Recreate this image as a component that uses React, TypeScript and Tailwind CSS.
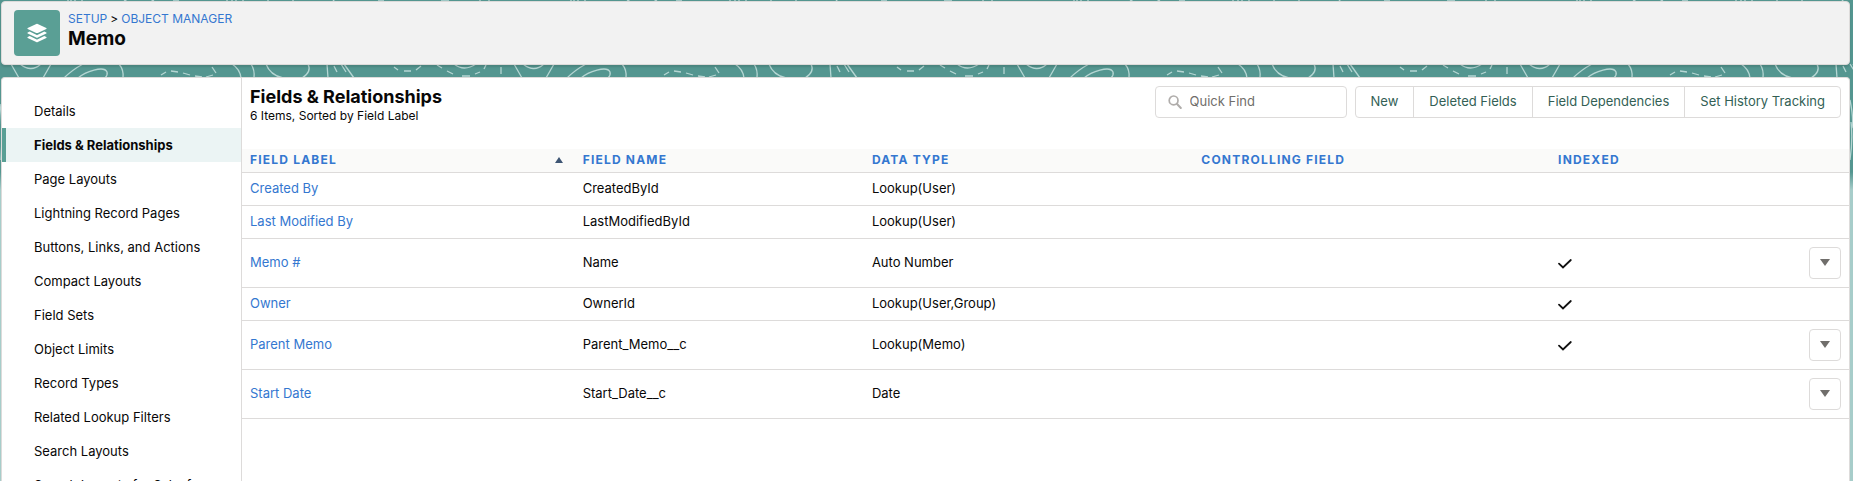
import React from 'react';

type Field = {
  label: string;
  name: string;
  type: string;
  indexed?: boolean;
  menu?: boolean;
};

const navItems = [
  'Details',
  'Fields & Relationships',
  'Page Layouts',
  'Lightning Record Pages',
  'Buttons, Links, and Actions',
  'Compact Layouts',
  'Field Sets',
  'Object Limits',
  'Record Types',
  'Related Lookup Filters',
  'Search Layouts',
  'Search Layouts for Salesforce Classic',
];

const fields: Field[] = [
  { label: 'Created By', name: 'CreatedById', type: 'Lookup(User)' },
  { label: 'Last Modified By', name: 'LastModifiedById', type: 'Lookup(User)' },
  { label: 'Memo #', name: 'Name', type: 'Auto Number', indexed: true, menu: true },
  { label: 'Owner', name: 'OwnerId', type: 'Lookup(User,Group)', indexed: true },
  { label: 'Parent Memo', name: 'Parent_Memo__c', type: 'Lookup(Memo)', indexed: true, menu: true },
  { label: 'Start Date', name: 'Start_Date__c', type: 'Date', menu: true },
];

const actions = ['New', 'Deleted Fields', 'Field Dependencies', 'Set History Tracking'];

// Contour lines behind the page, repeated across the top band
const Backdrop = () => (
  <svg className="absolute inset-x-0 top-0 w-full h-[190px]" aria-hidden="true">
    <defs>
      <pattern id="contours" width="503" height="190" patternUnits="userSpaceOnUse">
        <g fill="none" stroke="#b5d6d3" strokeWidth="1.3">
          <path d="M68 0v2M71 0v2M75 0v2M82 0v2M124 0l4 2M150 2l4-2M173 0h6M227 0v2M232 0v2M236 0v2M243 0v2M268 0v2M293 0v2M333 0l2 2M378 0h6M441 0h8M480 0v2M489 0v2" />
          <path d="M11 64L19 78M20 64Q31 73 41 64M51 64L43 78M64 78Q72 70 83 64" />
          <path d="M78 78C85 72 104 65 107 72Q108 75 105 78" />
          <path d="M119 64Q124 70 123 78M232 64Q240 69 241 78M251 64Q255 70 254 78" />
          <path d="M266 64Q270 75 283 78M308 64Q312 72 302 78M327 64L328 78M344 64L354 78M454 64Q464 72 476 64" />
          <path d="M161 75L166 72M171 71L178 72M183 73L190 75M195 76L202 77M206 77L213 75M212 67L216 73M334 66L337 72" />
          <path d="M394 67L398 70M404 71L411 71M416 70L421 66M437 65L442 68M447 71L453 74M462 76L470 76M475 74L480 72M484 69L486 65M501 67V74" />
          <path d="M341 64L346 72M341 100Q345 120 343 128M342 122Q344 140 341 160M0 104Q3 125 1 160" />
        </g>
      </pattern>
    </defs>
    <rect width="100%" height="100%" fill="url(#contours)" />
  </svg>
);

const LayersIcon = () => (
  <svg viewBox="0 0 20 20" className="w-5 h-5" fill="white" aria-hidden="true">
    <path d="M9.3 1Q10 .7 10.7 1L19.3 5Q20 5.4 19.3 5.9L10.8 9.9Q10 10.3 9.2 9.9L.7 5.9Q0 5.4.7 5Z" />
    <path d="M.7 9.5L2.7 8.6L9.2 11.7Q10 12.1 10.8 11.7L17.3 8.6L19.3 9.5Q20 10 19.3 10.4L10.8 14.5Q10 14.9 9.2 14.5L.7 10.4Q0 10 .7 9.5Z" />
    <path d="M.7 14L2.7 13.1L9.2 16.2Q10 16.6 10.8 16.2L17.3 13.1L19.3 14Q20 14.5 19.3 14.9L10.8 19Q10 19.4 9.2 19L.7 14.9Q0 14.5.7 14Z" />
  </svg>
);

const SearchIcon = () => (
  <svg viewBox="0 0 14 14" className="w-3.5 h-3.5 shrink-0" fill="none" stroke="#b0adab" aria-hidden="true">
    <circle cx="5.6" cy="5.4" r="4.4" strokeWidth="1.7" />
    <path d="M8.8 8.8L12.8 13" strokeWidth="2" strokeLinecap="round" />
  </svg>
);

const CheckIcon = () => (
  <svg viewBox="0 0 14 10" className="w-3.5 h-2.5 mt-0.5" role="img" aria-label="Indexed">
    <path d="M1 4.6L5 8.5L12.8 1" fill="none" stroke="#111" strokeWidth="1.8" strokeLinecap="round" />
  </svg>
);

const PageHeader = () => (
  <header className="relative flex items-start gap-2 mt-px mr-[3px] ml-px h-16 px-3 py-2 bg-[#f2f2f2] border border-[#dddbda] rounded shadow-[0_2px_2px_rgba(0,0,0,0.12)]">
    <div className="flex items-center justify-center w-[46px] h-[46px] rounded bg-[#5a9f95]">
      <LayersIcon />
    </div>
    <div>
      <nav className="text-xs leading-[18px]" aria-label="Breadcrumbs">
        <a href="#setup" className="text-[#3477d0]">SETUP</a>
        <span className="px-[3px]">&gt;</span>
        <a href="#object-manager" className="text-[#3477d0]">OBJECT MANAGER</a>
      </nav>
      <h1 className="text-[19px] leading-[22px] font-bold">Memo</h1>
    </div>
  </header>
);

const Sidebar = () => (
  <nav className="w-60 shrink-0 pt-4 border-r border-[#dddbda]" aria-label="Object settings">
    <ul>
      {navItems.map((item, i) => (
        <li key={item}>
          <a
            href="#"
            className={
              i === 1
                ? 'block pl-7 pr-4 py-2 leading-[18px] font-bold bg-[#ebf4f4] border-l-4 border-[#5a9f95]'
                : 'block pl-8 pr-4 py-2 leading-[18px]'
            }
          >
            {item}
          </a>
        </li>
      ))}
    </ul>
  </nav>
);

const Toolbar = () => (
  <div className="flex items-start justify-between px-2 pt-2 h-[71px]">
    <div>
      <h2 className="text-lg leading-[22px] font-bold">Fields &amp; Relationships</h2>
      <p className="text-xs leading-4">6 Items, Sorted by Field Label</p>
    </div>
    <div className="flex gap-2">
      <label className="flex items-center gap-2 w-48 h-8 px-3 border border-[#dddbda] rounded bg-white">
        <SearchIcon />
        <input
          type="search"
          aria-label="Quick Find"
          placeholder="Quick Find"
          className="w-full min-w-0 outline-none placeholder:text-[#706e6b]"
        />
      </label>
      <div className="flex h-8 border border-[#dddbda] rounded divide-x divide-[#dddbda]">
        {actions.map((action) => (
          <button key={action} type="button" className="px-[15px] text-[#335f55] whitespace-nowrap">
            {action}
          </button>
        ))}
      </div>
    </div>
  </div>
);

const FieldTable = () => (
  <table className="w-full table-fixed border-collapse text-left">
    <colgroup>
      <col className="w-[20.7%]" />
      <col className="w-[18%]" />
      <col className="w-[20.5%]" />
      <col className="w-[22.2%]" />
      <col />
      <col className="w-[50px]" />
    </colgroup>
    <thead className="bg-[#fafaf9] text-xs text-[#3477d0] tracking-widest">
      <tr className="h-[23px] border-b border-[#dddbda]">
        <th className="px-2 font-bold">
          <div className="flex items-center justify-between pr-1">
            FIELD LABEL
            <svg viewBox="0 0 8 6" className="w-2 h-1.5" fill="#3e5574" aria-hidden="true">
              <path d="M4 0L8 6H0Z" />
            </svg>
          </div>
        </th>
        <th className="px-2 font-bold">FIELD NAME</th>
        <th className="px-2 font-bold">DATA TYPE</th>
        <th className="px-2 font-bold">CONTROLLING FIELD</th>
        <th className="px-2 font-bold">INDEXED</th>
        <td />
      </tr>
    </thead>
    <tbody>
      {fields.map((field) => (
        <tr
          key={field.name}
          className={field.menu ? 'h-[49px] border-b border-[#dddbda]' : 'h-[33px] border-b border-[#dddbda]'}
        >
          <td className="px-2">
            <a href="#" className="text-[#3477d0]">{field.label}</a>
          </td>
          <td className="px-2">{field.name}</td>
          <td className="px-2">{field.type}</td>
          <td className="px-2" />
          <td className="px-2">{field.indexed && <CheckIcon />}</td>
          <td className="px-2">
            {field.menu && (
              <button
                type="button"
                aria-label={`Actions for ${field.label}`}
                className="flex items-center justify-center w-8 h-8 ml-auto border border-[#dddbda] rounded bg-white"
              >
                <svg viewBox="0 0 10 7" className="w-2.5 h-[7px]" fill="#706e6b" aria-hidden="true">
                  <path d="M0 0H10L5 7Z" />
                </svg>
              </button>
            )}
          </td>
        </tr>
      ))}
    </tbody>
  </table>
);

export default function App() {
  return (
    <div className="relative flex flex-col h-screen overflow-hidden bg-[linear-gradient(#549690_172px,#a7cdca_190px)] font-[Inter,'Liberation_Sans',sans-serif] text-[13px] text-[#080707]">
      <Backdrop />
      <PageHeader />
      <div className="relative flex grow min-h-0 mt-3 mr-[3px] ml-px bg-white border border-b-0 border-[#dddbda] rounded-t">
        <Sidebar />
        <main className="grow min-w-0">
          <Toolbar />
          <FieldTable />
        </main>
      </div>
    </div>
  );
}
